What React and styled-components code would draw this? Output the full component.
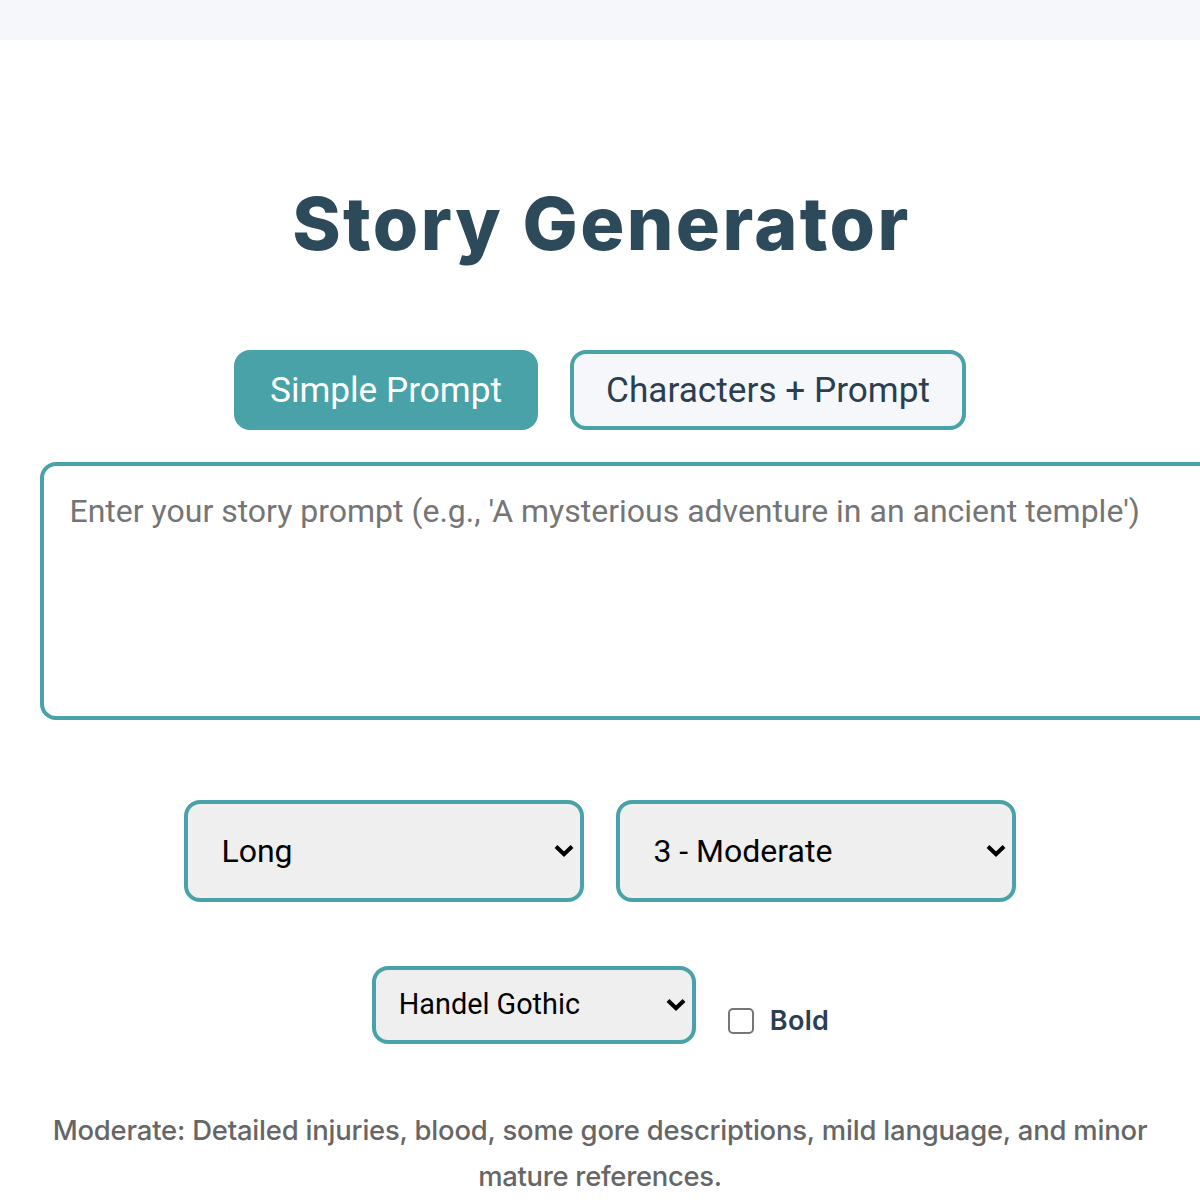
import React, { useState } from 'react'
import styled, { createGlobalStyle } from 'styled-components'

const GlobalStyle = createGlobalStyle`
  body {
    margin: 0;
    height: 1200px;
    overflow: hidden;
    background: #f5f7fb;
    color: #2c3e50;
    font-family: Roboto, sans-serif;
  }
  button, select, textarea {
    font-family: inherit;
  }
`

const Page = styled.main`
  display: flex;
  flex-direction: column;
  align-items: center;
  height: 1160px;
  margin-top: 40px;
  padding: 139px 40px 0;
  box-sizing: border-box;
  overflow: hidden;
  background: #fff;
`

const Title = styled.h1`
  margin: 0;
  height: 171px;
  line-height: 90px;
  padding-left: 3px;
  font-family: Inter, sans-serif;
  font-size: 73.5px;
  font-weight: 800;
  letter-spacing: 2.4px;
  word-spacing: 1px;
  white-space: nowrap;
  color: #2c4a5a;
`

const Modes = styled.div`
  display: flex;
  gap: 32px;
`

const ModeButton = styled.button`
  width: ${props => props.$width}px;
  height: 80px;
  padding: 0;
  border: 4px solid #48a2a8;
  border-radius: 16px;
  background: ${props => (props.$active ? '#48a2a8' : '#f5f7fb')};
  color: ${props => (props.$active ? '#fff' : '#2c3e50')};
  font-size: 35.2px;
  white-space: nowrap;
`

const Prompt = styled.textarea`
  align-self: flex-start;
  flex: none;
  width: 1176px;
  height: 258px;
  margin-top: 32px;
  padding: 26px 25.5px;
  box-sizing: border-box;
  border: 4px solid #48a2a8;
  border-radius: 16px;
  background: #fff;
  font-size: 32px;
  line-height: 38px;
  resize: none;
  outline: none;
  &::placeholder {
    color: #757575;
  }
`

const Options = styled.div`
  display: flex;
  gap: 32px;
  margin-top: ${props => props.$top}px;
`

const SelectBox = styled.div`
  position: relative;
  width: ${props => props.$width}px;
  height: ${props => props.$height}px;
  svg {
    position: absolute;
    right: 10px;
    top: 50%;
    margin-top: -7px;
    pointer-events: none;
  }
`

const Select = styled.select`
  appearance: none;
  width: 100%;
  height: 100%;
  padding: 0 ${props => props.$pad}px ${props => props.$lift || 0}px;
  border: 4px solid #48a2a8;
  border-radius: 16px;
  background: #efefef;
  color: #000;
  font-size: ${props => props.$size}px;
`

const BoldLabel = styled.label`
  display: flex;
  align-items: center;
  gap: 16px;
  height: 34px;
  margin-top: 38px;
  margin-right: -1px;
  font-family: Inter, sans-serif;
  font-size: 27px;
  font-weight: 600;
  letter-spacing: 0.3px;
`

const LabelText = styled.span`
  margin-bottom: 1px;
`

const Checkbox = styled.input`
  appearance: none;
  width: 26px;
  height: 26px;
  margin: 0;
  box-sizing: border-box;
  border: 2px solid #767676;
  border-radius: 5px;
  background: #fff;
  &:checked {
    background: #48a2a8;
  }
`

const Description = styled.p`
  margin: 63px 0 0;
  text-align: center;
  font-family: Inter, sans-serif;
  font-size: 27.4px;
  font-weight: 500;
  line-height: 46px;
  white-space: nowrap;
  color: #666;
`

const Line = styled.span`
  display: block;
  letter-spacing: ${props => props.$spacing}px;
`

const Dropdown = ({ width, height, pad, lift, size, value, onChange, options }) => (
  <SelectBox $width={width} $height={height}>
    <Select $pad={pad} $lift={lift} $size={size} value={value} onChange={e => onChange(e.target.value)}>
      {options.map(option => <option key={option}>{option}</option>)}
    </Select>
    <svg width="20" height="14" viewBox="0 0 20 14">
      <path d="M2 2.5 10 10.3 18 2.5" fill="none" stroke="#000" strokeWidth="4" />
    </svg>
  </SelectBox>
)

const App = () => {
  const [mode, setMode] = useState('simple')
  const [length, setLength] = useState('Long')
  const [rating, setRating] = useState('3 - Moderate')
  const [font, setFont] = useState('Handel Gothic')

  return (
    <>
      <GlobalStyle />
      <Page>
        <Title>Story Generator</Title>
        <Modes>
          <ModeButton $width={304} $active={mode === 'simple'} onClick={() => setMode('simple')}>
            Simple Prompt
          </ModeButton>
          <ModeButton $width={396} $active={mode === 'characters'} onClick={() => setMode('characters')}>
            Characters + Prompt
          </ModeButton>
        </Modes>
        <Prompt placeholder="Enter your story prompt (e.g., 'A mysterious adventure in an ancient temple')" />
        <Options $top={80}>
          <Dropdown width={400} height={102} pad={33.4} size={32}
            value={length} onChange={setLength} options={['Short', 'Medium', 'Long']} />
          <Dropdown width={400} height={102} pad={33.4} size={32}
            value={rating} onChange={setRating} options={['1 - Mild', '2 - Light', '3 - Moderate']} />
        </Options>
        <Options $top={64}>
          <Dropdown width={324} height={78} pad={23} lift={2} size={28.8}
            value={font} onChange={setFont} options={['Handel Gothic', 'Roboto']} />
          <BoldLabel>
            <Checkbox type="checkbox" />
            <LabelText>Bold</LabelText>
          </BoldLabel>
        </Options>
        <Description>
          <Line $spacing={-0.18}>Moderate: Detailed injuries, blood, some gore descriptions, mild language, and minor</Line>
          <Line $spacing={-0.28}>mature references.</Line>
        </Description>
      </Page>
    </>
  )
}

export default App
